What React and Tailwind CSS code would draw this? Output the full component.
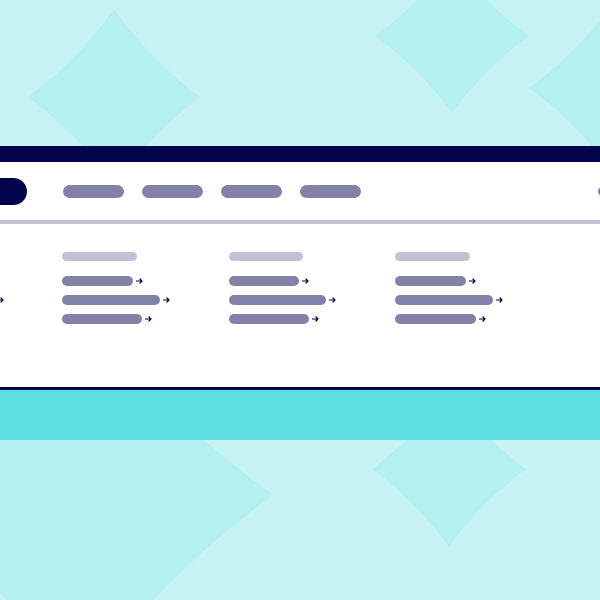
import React from "react";

function diamond(cx, cy, w, h, k = 0.42) {
  return `M ${cx} ${cy - h} Q ${cx + k * w} ${cy - k * h} ${cx + w} ${cy} Q ${cx + k * w} ${cy + k * h} ${cx} ${cy + h} Q ${cx - k * w} ${cy + k * h} ${cx - w} ${cy} Q ${cx - k * w} ${cy - k * h} ${cx} ${cy - h} Z`;
}

function Arrow() {
  return (
    <svg width="7" height="6" viewBox="0 0 7 6" className="shrink-0">
      <path d="M0.5 3 H6 M4 1 L6 3 L4 5" fill="none" stroke="#00044a" strokeWidth="1.2" strokeLinecap="round" strokeLinejoin="round" />
    </svg>
  );
}

function Row({ w }) {
  return (
    <div className="flex items-center gap-[3px]">
      <div className="h-[10px] rounded-full bg-[#8282a8]" style={{ width: w }} />
      <Arrow />
    </div>
  );
}

function Column({ header, rows }) {
  return (
    <div className="w-[166.5px] shrink-0 flex flex-col">
      <div className="h-[9px] rounded-full bg-[#c1c1d5]" style={{ width: header }} />
      <div className="mt-[15px] flex flex-col gap-[9px]">
        {rows.map((r, i) => (
          <Row key={i} w={r} />
        ))}
      </div>
    </div>
  );
}

export default function App() {
  const cols = [
    { header: 75, rows: [71, 98, 80] },
    { header: 75, rows: [71, 98, 80] },
    { header: 74, rows: [70, 97, 80] },
    { header: 75, rows: [71, 98, 81] },
  ];
  return (
    <div className="relative w-[600px] h-[600px] overflow-hidden bg-[#c7f3f3]">
      <svg className="absolute inset-0" width="600" height="600" viewBox="0 0 600 600">
        <g fill="#b4f0f0">
          <path d={diamond(114, 97, 86, 88)} />
          <path d={diamond(452, 36, 77, 77)} />
          <path d={diamond(612, 88, 83, 83)} />
          <path d={diamond(80, 495, 193, 193)} />
          <path d={diamond(449, 469, 77, 78)} />
        </g>
      </svg>
      <div className="relative pt-[146px]">
        <div className="h-[16px] bg-[#00044a]" />
        <div className="h-[228px] bg-white border-b-[3px] border-[#00044a] flex flex-col">
          <div className="mt-[16px] h-[27px] flex items-center">
            <div className="ml-[-40px] w-[67px] h-[27px] rounded-full bg-[#00044a] shrink-0" />
            <div className="ml-[36px] flex items-center gap-[18px]">
              <div className="w-[61px] h-[13px] rounded-full bg-[#8282a8]" />
              <div className="w-[61px] h-[13px] rounded-full bg-[#8282a8]" />
              <div className="w-[61px] h-[13px] rounded-full bg-[#8282a8]" />
              <div className="w-[61px] h-[13px] rounded-full bg-[#8282a8]" />
            </div>
            <div className="ml-auto mr-[-40px] w-[42px] h-[9px] rounded-full bg-[#8282a8] shrink-0" />
          </div>
          <div className="mt-[15px] h-[4px] bg-[#c2c2d5]" />
          <div className="mt-[28px] ml-[-104.5px] flex">
            {cols.map((c, i) => (
              <Column key={i} header={c.header} rows={c.rows} />
            ))}
          </div>
        </div>
        <div className="h-[50px] bg-[#5cdee0]" />
      </div>
    </div>
  );
}
